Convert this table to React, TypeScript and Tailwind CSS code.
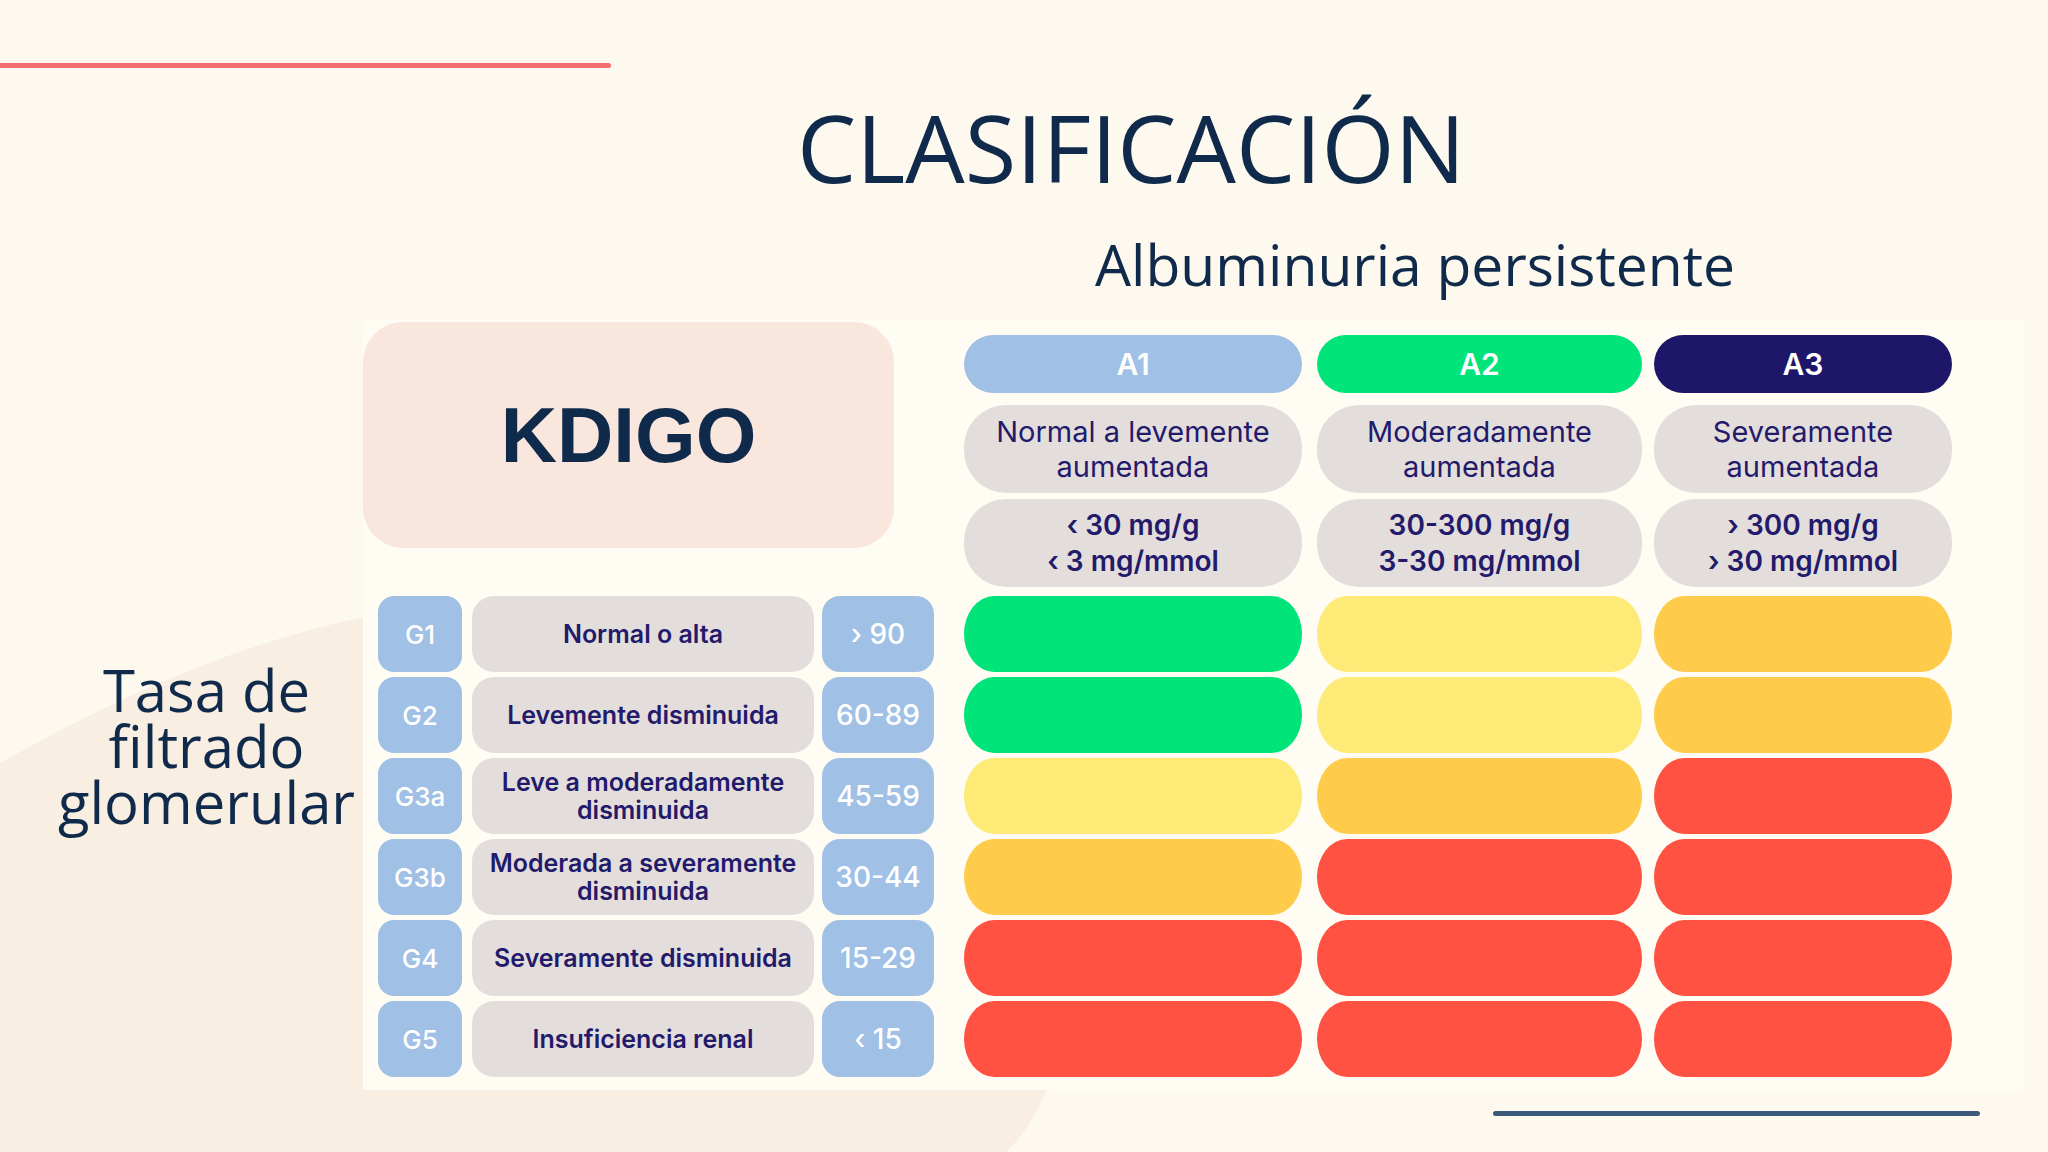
import React from 'react';

const GREEN = 'bg-[#00e47a]';
const YELLOW = 'bg-[#feea76]';
const ORANGE = 'bg-[#fecb4b]';
const RED = 'bg-[#ff5243]';

const colWidth = ['w-[338px]', 'w-[325px]', 'w-[298px]'];
const colGap = ['', 'ml-[15px]', 'ml-[12px]'];

const headers = [
  { label: 'A1', color: 'bg-[#a0c0e6]', desc: ['Normal a levemente', 'aumentada'], range: ['‹ 30 mg/g', '‹ 3 mg/mmol'] },
  { label: 'A2', color: 'bg-[#00e47a]', desc: ['Moderadamente', 'aumentada'], range: ['30-300 mg/g', '3-30 mg/mmol'] },
  { label: 'A3', color: 'bg-[#1e1669]', desc: ['Severamente', 'aumentada'], range: ['› 300 mg/g', '› 30 mg/mmol'] },
];

const rows = [
  { g: 'G1', d: 'Normal o alta', v: '› 90', c: [GREEN, YELLOW, ORANGE] },
  { g: 'G2', d: 'Levemente disminuida', v: '60-89', c: [GREEN, YELLOW, ORANGE] },
  { g: 'G3a', d: 'Leve a moderadamente disminuida', v: '45-59', c: [YELLOW, ORANGE, RED] },
  { g: 'G3b', d: 'Moderada a severamente disminuida', v: '30-44', c: [ORANGE, RED, RED] },
  { g: 'G4', d: 'Severamente disminuida', v: '15-29', c: [RED, RED, RED] },
  { g: 'G5', d: 'Insuficiencia renal', v: '‹ 15', c: [RED, RED, RED] },
];

const Blob = () => (
  <svg className="absolute inset-0" width="2048" height="1152" viewBox="0 0 2048 1152">
    <path
      d="M0,763 Q200,650 365,617 C700,560 1090,800 1052,1070 Q1040,1120 1006,1152 L0,1152 Z"
      fill="#f8eee2"
    />
  </svg>
);

export default function App() {
  return (
    <div className="relative w-[2048px] h-[1152px] overflow-hidden bg-[#fdf9ef] font-['Inter',sans-serif]">
      <Blob />

      <div className="relative flex flex-col">
        {/* top accent */}
        <div className="mt-[63px] h-[5px] w-[611px] rounded-r-full bg-[#f46e70]" />

        <h1 className="mt-[32px] pl-[797px] text-[94px] leading-none text-[#0f2a4a] font-['Open_Sans',sans-serif]">
          CLASIFICACIÓN
        </h1>
        <h2 className="mt-[42px] pl-[1095px] text-[57px] leading-none text-[#0f2a4a] font-['Open_Sans',sans-serif]">
          Albuminuria persistente
        </h2>

        <div className="mt-[27px] flex">
          {/* row axis label */}
          <div className="w-[363px] pl-[50px] pt-[342px] text-center text-[58px] leading-[56px] text-[#0f2a4a] font-['Open_Sans',sans-serif]">
            Tasa de
            <br />
            filtrado
            <br />
            glomerular
          </div>

          {/* table */}
          <div className="w-[1661px] h-[770px] bg-[#fffdf3] flex flex-col">
            <div className="flex h-[276px]">
              <div className="w-[601px]">
                <div className="mt-[2px] w-[531px] h-[226px] rounded-[40px] bg-[#f9e6dd] flex items-center justify-center">
                  <span className="text-[78px] font-bold text-[#0f2a4a] font-['Liberation_Sans',Arial,sans-serif]">KDIGO</span>
                </div>
              </div>
              <div className="flex pt-[15px]">
                {headers.map((h, i) => (
                  <div key={h.label} className={`flex flex-col ${colWidth[i]} ${colGap[i]}`}>
                    <div className={`h-[58px] rounded-full ${h.color} flex items-center justify-center text-[30px] font-semibold text-white`}>
                      {h.label}
                    </div>
                    <div className="mt-[12px] h-[88px] rounded-[42px] bg-[#e3dedc] flex flex-col items-center justify-center text-[29px] leading-[35px] text-[#231a6b]">
                      <span>{h.desc[0]}</span>
                      <span>{h.desc[1]}</span>
                    </div>
                    <div className="mt-[6px] h-[88px] rounded-[42px] bg-[#e3dedc] flex flex-col items-center justify-center text-[28px] leading-[36px] font-semibold text-[#231a6b]">
                      <span>{h.range[0]}</span>
                      <span>{h.range[1]}</span>
                    </div>
                  </div>
                ))}
              </div>
            </div>

            <div className="flex flex-col gap-[5px]">
              {rows.map((r) => (
                <div key={r.g} className="flex h-[76px] pl-[15px]">
                  <div className="w-[84px] rounded-[16px] bg-[#a0c0e6] flex items-center justify-center text-[26px] font-medium text-white">
                    {r.g}
                  </div>
                  <div className="ml-[10px] w-[342px] rounded-[22px] bg-[#e3dedc] flex items-center justify-center px-2 text-center text-[25px] leading-[28px] font-semibold text-[#231a6b]">
                    {r.d}
                  </div>
                  <div className="ml-[8px] w-[112px] rounded-[18px] bg-[#a0c0e6] flex items-center justify-center text-[28px] font-medium text-white">
                    {r.v}
                  </div>
                  <div className="ml-[30px] flex">
                    {r.c.map((c, i) => (
                      <div key={i} className={`${colWidth[i]} ${colGap[i]} h-[76px] rounded-[30px/38px] ${c}`} />
                    ))}
                  </div>
                </div>
              ))}
            </div>
          </div>
        </div>

        {/* bottom accent */}
        <div className="mt-[21px] ml-[1493px] h-[5px] w-[487px] rounded-full bg-[#3d5a7a]" />
      </div>
    </div>
  );
}
